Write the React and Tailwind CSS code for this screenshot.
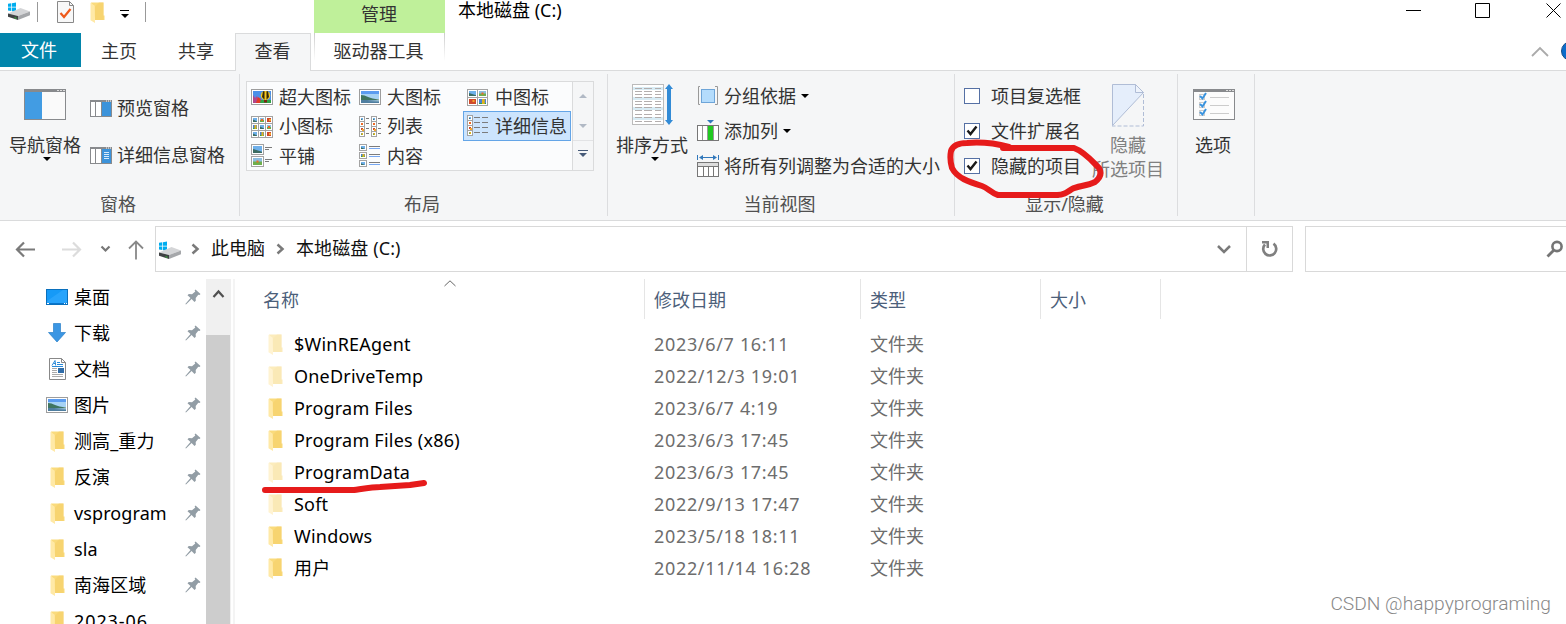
import React from 'react'

const quickAccess = [
  { name: '桌面', icon: 'desktop', pinned: true },
  { name: '下载', icon: 'download', pinned: true },
  { name: '文档', icon: 'document', pinned: true },
  { name: '图片', icon: 'picture', pinned: true },
  { name: '测高_重力', icon: 'folder', pinned: true },
  { name: '反演', icon: 'folder', pinned: true },
  { name: 'vsprogram', icon: 'folder', pinned: true },
  { name: 'sla', icon: 'folder', pinned: true },
  { name: '南海区域', icon: 'folder', pinned: true },
  { name: '2023-06', icon: 'folder', pinned: false },
]

const files = [
  { name: '$WinREAgent', date: '2023/6/7 16:11', hidden: true },
  { name: 'OneDriveTemp', date: '2022/12/3 19:01', hidden: true },
  { name: 'Program Files', date: '2023/6/7 4:19' },
  { name: 'Program Files (x86)', date: '2023/6/3 17:45' },
  { name: 'ProgramData', date: '2023/6/3 17:45', hidden: true },
  { name: 'Soft', date: '2022/9/13 17:47', hidden: true },
  { name: 'Windows', date: '2023/5/18 18:11' },
  { name: '用户', date: '2022/11/14 16:28' },
]

const layouts = [
  { name: '超大图标', icon: 'balloon' },
  { name: '大图标', icon: 'lake' },
  { name: '中图标', icon: 'medium' },
  { name: '小图标', icon: 'small' },
  { name: '列表', icon: 'list' },
  { name: '详细信息', icon: 'details', active: true },
  { name: '平铺', icon: 'tiles' },
  { name: '内容', icon: 'content' },
]

const DriveIcon = () => (
  <svg width="24" height="20" viewBox="0 0 24 20" className="shrink-0">
    <path d="M1 1.8l3.3-.5v3.5H1zM5 1.2L9 .6v4.2H5zM1 5.6h3.3v3.5L1 8.6zM5 5.6h4v4.2l-4-.6z" fill="#00adef" />
    <path d="M1 11.5L13.5 6 23 9.5 11 14z" fill="#d4d5d7" />
    <path d="M11 14l12-4.5v3.7L11 18z" fill="#a5a7aa" />
    <path d="M1 11.5L11 14v4L1 14.7z" fill="#3f4244" />
    <path d="M7.5 15.2l2 .5v1l-2-.5z" fill="#39c23c" />
  </svg>
)

const FolderIcon = ({ faded }) => (
  <svg width="15" height="24" viewBox="0 -2 15 24" className={faded ? 'shrink-0 opacity-50' : 'shrink-0'}>
    <path d="M1 .5h12.500v13h1v4.500H5z" fill="#fadb7c" />
    <path d="M5 4.500L9 .5h4.500v17.500H5z" fill="#f5cf69" opacity=".6" />
    <path d="M.5.8L4.700 3.800l.3 17.200L.5 18.200z" fill="#ffe9a6" />
  </svg>
)

const Thumb = ({ x, y, w, h, kind = 0 }) => (
  <g>
    <rect x={x + 0.5} y={y + 0.5} width={w - 1} height={h - 1} fill="#fff" stroke="#a3a3a3" />
    <rect x={x + 2} y={y + 2} width={w - 4} height={h - 4} fill={['#6fb0ea', '#8dbde0', '#cf4a2c', '#4d7fd6'][kind]} />
    {kind === 0 && (
      <path d={`M${x + 2} ${y + h * 0.45}L${x + w - 2} ${y + h * 0.7}V${y + h - 2}H${x + 2}z`} fill="#3c6c62" />
    )}
    {kind === 1 && (
      <>
        <rect x={x + 2} y={y + h / 2} width={w - 4} height={h / 2 - 2} fill="#6fae4c" />
        <rect x={x + w / 2 - 1} y={y + h / 2 - 1} width="2" height="2" fill="#ef6a25" />
      </>
    )}
    {kind === 2 && <rect x={x + w / 2} y={y + 3} width="2" height="2" fill="#f6a52a" />}
    {kind === 3 && (
      <>
        <rect x={x + 2} y={y + h - 3} width={w - 4} height="1" fill="#2fa348" />
        <rect x={x + w / 2 - 0.5} y={y + 2} width={w / 4} height={h - 4} fill="#e0b51c" />
      </>
    )}
  </g>
)

const LakeIcon = () => (
  <svg width="22" height="17" viewBox="0 0 22 17" className="shrink-0">
    <rect x=".5" y=".5" width="21" height="15" fill="#fff" stroke="#9d9d9d" />
    <rect x="2" y="2" width="18" height="3" fill="#5b9cf0" />
    <rect x="2" y="5" width="18" height="5" fill="#a6d2f4" />
    <path d="M2 6c5 0 8 3.500 18 4.500v1H2z" fill="#3f7560" />
    <path d="M2 11h18v3H2z" fill="#4f7ea0" />
    <path d="M8 12l12-1v1.500z" fill="#9cc3d6" />
  </svg>
)

const LayoutIcon = ({ name }) => {
  if (name === 'lake') return <LakeIcon />
  if (name === 'balloon') {
    return (
      <svg width="22" height="17" viewBox="0 0 22 17" className="shrink-0">
        <rect x=".5" y=".5" width="21" height="15" fill="#fff" stroke="#9d9d9d" />
        <rect x="2" y="2" width="18" height="12" fill="#4b90e8" />
        <path d="M2 11h18v3H2z" fill="#2fa348" />
        <path d="M2 6l2 3 2-2 2 4-2 3H2z" fill="#b3468a" />
        <path d="M7 8l3 2-1 4H5z" fill="#e33b25" />
        <ellipse cx="14.5" cy="6.5" rx="4.7" ry="4.5" fill="#f4c91e" />
        <path d="M12 2.300h1.500v8.500L11 8zM15.500 2.300H17L18 8l-2.500 2.800z" fill="#33260b" />
        <path d="M13 11h3v2.500h-3z" fill="#7d2414" />
      </svg>
    )
  }
  return (
    <svg width="22" height="23" viewBox="0 0 22 23" className="shrink-0">
      {name === 'medium' && (
        <>
          <Thumb x={0} y={3} w={11} h={9} />
          <Thumb x={10} y={3} w={11} h={9} kind={1} />
          <Thumb x={0} y={11} w={11} h={9} kind={2} />
          <Thumb x={10} y={11} w={11} h={9} kind={3} />
        </>
      )}
      {name === 'small' &&
        [0, 1, 2, 3, 0, 1, 0, 3, 2].map((kind, i) => (
          <Thumb key={i} x={(i % 3) * 7} y={1 + Math.floor(i / 3) * 7} w={8} h={8} kind={kind} />
        ))}
      {name === 'list' &&
        [0, 1, 2, 3].map((i) => (
          <g key={i}>
            <Thumb x={0} y={1 + i * 5} w={6} h={6} kind={i} />
            <Thumb x={12} y={1 + i * 5} w={6} h={6} kind={i} />
            <path d={`M7 ${3.5 + i * 5}h3M19 ${3.5 + i * 5}h3`} stroke="#7c7c7c" />
          </g>
        ))}
      {name === 'details' &&
        [0, 1, 2, 3].map((i) => (
          <g key={i}>
            <Thumb x={0} y={1 + i * 5} w={6} h={6} kind={i} />
            <path d={`M7 ${3.5 + i * 5}h6M15 ${3.5 + i * 5}h6`} stroke="#7c7c7c" />
          </g>
        ))}
      {name === 'tiles' && (
        <>
          <Thumb x={0} y={0} w={13} h={11} />
          <Thumb x={0} y={12} w={13} h={11} kind={1} />
          <path d="M14 3.5h7M14 5.5h4M14 15.5h7M14 17.5h4" stroke="#7c7c7c" />
        </>
      )}
      {name === 'content' &&
        [0, 1, 2].map((i) => (
          <g key={i}>
            <Thumb x={0} y={i * 8} w={8} h={7} kind={i === 1 ? 3 : 0} />
            <path d={`M10 ${2.5 + i * 8}h11`} stroke="#7c7c7c" />
            <path d={`M10 ${4.5 + i * 8}h11`} stroke="#77a8f2" />
          </g>
        ))}
    </svg>
  )
}

const PaneIcon = ({ details }) => (
  <svg width="22" height="17" viewBox="0 0 22 17" className="shrink-0">
    <rect x=".5" y=".5" width="21" height="16" fill="#fff" stroke="#888a8d" />
    <path d="M0 1h22" stroke="#888a8d" strokeWidth="2" />
    <path d="M5.5 2v14M11.5 2v14" stroke="#888a8d" />
    <path d="M12 2h9v14h-9z" fill="#3c93da" />
    <path d="M16 1h1M18 1h1M20 1h1" stroke="#fff" />
    {details && <path d="M14 5.5h5M14 7.5h5M14 9.5h5M14 11.5h5" stroke="#d6ebfb" />}
  </svg>
)

const NavPaneIcon = () => (
  <svg width="42" height="31" viewBox="0 0 42 31">
    <rect x=".5" y=".5" width="41" height="30" fill="#fafafa" stroke="#888a8d" />
    <path d="M0 1.5h42" stroke="#888a8d" strokeWidth="3" />
    <path d="M1 3h17v27H1z" fill="#429ce3" />
    <path d="M33 1.5h2M36 1.5h2M39 1.5h2" stroke="#ddd" />
  </svg>
)

const SortIcon = () => (
  <svg width="42" height="42" viewBox="0 0 42 42">
    <rect x=".5" y=".5" width="31" height="40" fill="#fff" stroke="#bbb" />
    {[4, 14, 24, 34].map((y) => (
      <path key={y} d={`M1 ${y + 0.5}h30`} stroke="#d8ecf5" strokeWidth="3" />
    ))}
    {[4, 7, 10, 13, 17, 20, 23, 26, 30, 33, 37].map((y) => (
      <path key={y} d={`M3 ${y + 0.5}h7M12 ${y + 0.5}h8M23 ${y + 0.5}h6`} stroke="#b3aeae" />
    ))}
    <path d="M37 0l4 5h-2v31h2l-4 5-4-5h2V5h-2z" fill="#328bd6" />
  </svg>
)

const GroupByIcon = () => (
  <svg width="22" height="22" viewBox="0 0 22 22" className="shrink-0">
    <path d="M3 1.5H1.500v18H3M18 1.500h2.500v18H18" fill="none" stroke="#999" />
    <rect x="4.500" y="4.500" width="13" height="13" fill="#b4dcfc" stroke="#6ea5d8" />
  </svg>
)

const AddColumnIcon = () => (
  <svg width="22" height="22" viewBox="0 0 22 22" className="shrink-0">
    <path d="M10 0h7l-3.500 3.500z" fill="#3178bb" />
    <rect x=".5" y="5.500" width="21" height="15" fill="#fff" stroke="#777" />
    <path d="M5.500 6v14M10.500 6v14M16.500 6v14" stroke="#999" />
    <path d="M11 6h5v14h-5z" fill="#22c922" />
  </svg>
)

const FitColumnsIcon = () => (
  <svg width="22" height="22" viewBox="0 0 22 22" className="shrink-0">
    <path d="M.5 0v5M21.500 0v5M3 2.500h16" stroke="#3178bb" />
    <path d="M2 2.500L6 0v5zM20 2.500L16 0v5z" fill="#3178bb" />
    <rect x=".5" y="7.500" width="21" height="14" fill="#fff" stroke="#777" />
    <path d="M1 8h20v3H1z" fill="#ddd" />
    <path d="M0 11.500h22M6.500 12v9M11.500 12v9M16.500 12v9" stroke="#777" />
  </svg>
)

const HideIcon = () => (
  <svg width="34" height="43" viewBox="0 0 34 43">
    <path d="M1.500.5h23l8 8-31 33z" fill="#e5eefb" stroke="#b0bdd6" />
    <path d="M24.500.5v8h8z" fill="#eef3fb" stroke="#b0bdd6" />
    <path d="M32.500 10v32H1" fill="none" stroke="#b0bdd6" strokeDasharray="4 2" />
  </svg>
)

const OptionsIcon = () => (
  <svg width="42" height="31" viewBox="0 0 42 31">
    <rect x=".5" y=".5" width="41" height="30" fill="#fcfcfc" stroke="#888a8d" />
    <path d="M0 1.500h42" stroke="#888a8d" strokeWidth="3" />
    <path d="M33 1.500h2M36 1.500h2M39 1.500h2" stroke="#ddd" />
    {[5, 13, 21].map((y) => (
      <g key={y}>
        <rect x="6.500" y={y + 0.5} width="5" height="5" fill="#fff" stroke="#ccc" />
        <path d={`M7 ${y + 2}l2.500 2.500L13 ${y - 1}`} fill="none" stroke="#3a94df" strokeWidth="2" />
        <path d={`M17 ${y + 3.5}h19`} stroke="#ccc" />
      </g>
    ))}
  </svg>
)

const SidebarIcon = ({ name }) => (
  <div className="flex w-[22px] justify-center shrink-0">
    {name === 'desktop' && (
      <svg width="22" height="16" viewBox="0 0 22 16">
        <rect x=".5" y=".5" width="21" height="15" fill="#169af7" stroke="#0a70bd" />
        <path d="M1 12L17 1h4v14H1z" fill="#36acff" opacity=".6" />
        <path d="M1 14.500h20" stroke="#0876cd" />
        <path d="M1 14.500h2M18 14.500h1M20 14.500h1" stroke="#fff" />
      </svg>
    )}
    {name === 'download' && (
      <svg width="18" height="20" viewBox="0 0 18 20">
        <path d="M5.500.5h7v9h5L9 19 .5 9.500h5z" fill="#3b96e3" stroke="#2a7fc9" strokeWidth=".7" />
      </svg>
    )}
    {name === 'document' && (
      <svg width="17" height="22" viewBox="0 0 17 22">
        <path d="M.5.5h12l4 4v17H.5z" fill="#fff" stroke="#888" />
        <path d="M12.500.5v4h4" fill="none" stroke="#888" />
        <path d="M3 7.500L6 2.500l.7 5M4.500 5.500h2" fill="none" stroke="#2989d8" />
        <path d="M8 4.500h3M8 6.500h6M3 8.500h11" stroke="#2989d8" />
        <path d="M3 10.500h5M3 12.500h5M3 14.500h5M3 16.500h11M3 18.500h11" stroke="#aaa" />
        <path d="M9 10h6v5H9z" fill="#2f6ca8" />
      </svg>
    )}
    {name === 'picture' && <LakeIcon />}
    {name === 'folder' && <FolderIcon />}
  </div>
)

const PinIcon = () => (
  <svg width="16" height="16" viewBox="0 0 16 16" className="shrink-0">
    <path d="M10.500.5L15.500 5l-1 1-1.200-.2-2.600 3.300.1 2.600-1.300 1.300L6.600 10 1 15.500l-.7-.5L5.500 9 2.500 6.200l1.300-1.100 3.200.2 3.300-2.800-.7-1z" fill="#929da5" />
  </svg>
)

const Caret = () => (
  <svg width="8" height="4" viewBox="0 0 8 4" className="shrink-0">
    <path d="M0 0h8L4 4z" fill="#000" />
  </svg>
)

const Chevron = () => (
  <svg width="9" height="12" viewBox="0 0 9 12" className="shrink-0">
    <path d="M1.500 1.500L6.500 6l-5 4.500" fill="none" stroke="#7a7a7a" strokeWidth="2.500" />
  </svg>
)

const Check = ({ label, checked }) => (
  <div className="flex h-[35px] items-center">
    <div className="mt-px flex h-4 w-4 items-center justify-center border border-[#5570a4] bg-white">
      {checked && (
        <svg width="12" height="12" viewBox="0 0 12 12">
          <path d="M1.500 5.500L4.500 9l6-7.500" fill="none" stroke="#1a1a1a" strokeWidth="2.400" />
        </svg>
      )}
    </div>
    <span className="ml-[11px]">{label}</span>
  </div>
)

const Group = ({ label, className, children }) => (
  <div className={`flex h-[142px] shrink-0 flex-col border-r border-[#dcdddf] ${className}`}>
    <div className="flex h-[117px]">{children}</div>
    <div className="h-[25px] pr-[3px] text-center text-[#505050]">{label}</div>
  </div>
)

const TitleBar = () => (
  <div className="flex h-[33px] items-start">
    <div className="flex h-6 w-[314px] items-center pl-[7px]">
      <DriveIcon />
      <div className="ml-[6px] h-5 w-px bg-[#999]" />
      <svg width="17" height="22" viewBox="0 0 17 22" className="ml-[19px]">
        <path d="M.5.5h12l4 4v17H.5z" fill="#f8f8f8" stroke="#888" />
        <path d="M12.500.5v4h4" fill="none" stroke="#888" />
        <path d="M3.500 12l3.500 4 6.500-8" fill="none" stroke="#ee5a1c" strokeWidth="2.200" />
      </svg>
      <div className="ml-4 flex"><FolderIcon /></div>
      <svg width="10" height="8" viewBox="0 0 10 8" className="ml-[15px] mt-1">
        <path d="M0 .5h9" stroke="#000" />
        <path d="M1 4h8L5 8z" fill="#000" />
      </svg>
      <div className="ml-[15px] h-5 w-px bg-[#999]" />
    </div>
    <div className="h-[33px] w-[131px] bg-[#bff09a] pt-px pr-px text-center text-[#333]">管理</div>
    <div className="ml-[13px] flex-1 leading-5 text-black">本地磁盘 (C:)</div>
    <svg width="160" height="20" viewBox="0 0 160 20" fill="none" stroke="#000">
      <path d="M0 10.500h15M69.500 3.500h14v14h-14zM140.500 3.500l14 14M154.500 3.500l-14 14" />
    </svg>
  </div>
)

const Tabs = () => (
  <div className="flex h-[38px] border-b border-[#dadbdc] text-[#333]">
    <div className="h-[34px] w-[81px] bg-[#0285ab] pt-1 pr-[3px] text-center text-white">文件</div>
    <div className="w-[77px] pt-[5px] pl-5">主页</div>
    <div className="w-[77px] pt-[5px] pl-5">共享</div>
    <div className="h-[38px] w-[76px] border-x border-t border-[#dadbdc] bg-[#f5f6f7] pt-1 pr-px text-center">查看</div>
    <div className="ml-[3px] flex w-[131px] justify-between">
      <div className="h-7 w-px bg-linear-to-b from-[#ccc] to-white" />
      <span className="pt-[5px] pr-[2px]">驱动器工具</span>
      <div className="h-7 w-px bg-linear-to-b from-[#ccc] to-white" />
    </div>
    <div className="flex flex-1 items-center justify-end overflow-hidden">
      <svg width="36" height="20" viewBox="0 0 36 20">
        <path d="M2 14l8-8 8 8" fill="none" stroke="#aaa" strokeWidth="1.800" />
        <circle cx="41" cy="9" r="9.500" fill="#0b6ccb" stroke="#174f88" />
      </svg>
    </div>
  </div>
)

const Ribbon = () => (
  <div className="flex h-[150px] border-b border-[#dadbdc] bg-[#f5f6f7] pt-[3px] text-[#333]">
    <Group label="窗格" className="w-[240px]">
      <div className="flex w-[90px] flex-col items-center pt-[15px]">
        <NavPaneIcon />
        <span className="mt-[13px] leading-6">导航窗格</span>
        <div className="mr-[-4px]"><Caret /></div>
      </div>
      <div className="flex flex-col gap-[23px] pt-[22px]">
        <div className="flex items-center gap-[5px] leading-6"><PaneIcon />预览窗格</div>
        <div className="flex items-center gap-[5px] leading-6"><PaneIcon details />详细信息窗格</div>
      </div>
    </Group>

    <Group label="布局" className="w-[368px]">
      <div className="mt-[7px] ml-[6px] flex h-[90px] border border-[#dadbdc] bg-[#fbfcfd]">
        <div className="grid w-[324px] grid-cols-3 grid-rows-3">
          {layouts.map((item) => (
            <div
              key={item.name}
              className={
                item.active
                  ? 'flex items-center gap-[6px] border border-[#64a5e7] bg-[#cce4fd] pl-[3px]'
                  : 'flex items-center gap-[6px] pt-px pl-1'
              }
            >
              <LayoutIcon name={item.icon} />
              {item.name}
            </div>
          ))}
        </div>
        <div className="ml-px flex w-[21px] flex-col items-center border-l border-[#dadbdc] bg-[#f5f6f7]">
          <svg width="20" height="88" viewBox="0 0 20 88">
            <path d="M6 16h8l-4-4zM6 42h8l-4 4z" fill="#b1b9c5" />
            <path d="M0 58.500h20" stroke="#e2e3e5" />
            <path d="M5 68.500h10" stroke="#465a78" />
            <path d="M6 71h8l-4 4z" fill="#465a78" />
          </svg>
        </div>
      </div>
    </Group>

    <Group label="当前视图" className="w-[347px]">
      <div className="flex w-[89px] flex-col items-center pt-[10px]">
        <SortIcon />
        <span className="mt-[7px] mr-px leading-6">排序方式</span>
        <div className="mr-[-4px]"><Caret /></div>
      </div>
      <div className="flex flex-col pt-1">
        <div className="flex h-[35px] items-center gap-[5px]"><GroupByIcon />分组依据<Caret /></div>
        <div className="flex h-[35px] items-center gap-[5px]"><AddColumnIcon />添加列<Caret /></div>
        <div className="flex h-[35px] items-center gap-[5px]"><FitColumnsIcon />将所有列调整为合适的大小</div>
      </div>
    </Group>

    <Group label="显示/隐藏" className="w-[223px]">
      <div className="w-[126px] shrink-0 pt-1 pl-[9px]">
        <Check label="项目复选框" />
        <Check label="文件扩展名" checked />
        <Check label="隐藏的项目" checked />
      </div>
      <div className="flex w-[94px] flex-col items-center pt-[10px] text-center text-[#808080]">
        <HideIcon />
        <span className="mt-[6px] leading-6">隐藏<br />所选项目</span>
      </div>
    </Group>

    <Group label="" className="w-[77px]">
      <div className="flex w-[72px] flex-col items-center pt-[15px]">
        <OptionsIcon />
        <span className="mt-[13px] mr-[2px] leading-6">选项</span>
      </div>
    </Group>
  </div>
)

const AddressBar = () => (
  <div className="flex h-[58px] pt-[5px] text-[#111]">
    <div className="flex h-[46px] w-[155px] items-center">
      <svg width="150" height="24" viewBox="0 0 150 24" fill="none">
        <path d="M17 12.500h18M24 5.500l-7 7 7 7" stroke="#7a7a7a" strokeWidth="2.200" />
        <path d="M62 12.500h18M73 5.500l7 7-7 7" stroke="#dcdcdc" strokeWidth="2.200" />
        <path d="M101.500 9.500l4 4 4-4" stroke="#777" strokeWidth="2.200" />
        <path d="M136 22.500V4.500M129 11.500l7-7 7 7" stroke="#888" strokeWidth="1.800" />
      </svg>
    </div>
    <div className="flex h-[46px] w-[1138px] items-center border border-[#d9d9d9]">
      <div className="ml-[2px] flex pt-[3px]"><DriveIcon /></div>
      <div className="ml-[9px] flex"><Chevron /></div>
      <span className="ml-[11px] pb-[2px]">此电脑</span>
      <div className="ml-[11px] flex"><Chevron /></div>
      <span className="ml-[11px] flex-1 pb-[2px] tracking-[0.1px]">本地磁盘 (C:)</span>
      <svg width="16" height="10" viewBox="0 0 16 10" className="mr-[14px]">
        <path d="M2 2l6 6 6-6" fill="none" stroke="#7a7a7a" strokeWidth="2.500" />
      </svg>
      <div className="flex h-full w-[46px] items-center justify-center border-l border-[#d9d9d9]">
        <svg width="18" height="18" viewBox="0 0 18 18">
          <path d="M12.500 3.700A6.500 6.500 0 1 1 4 4.500" fill="none" stroke="#808080" strokeWidth="2.700" />
          <path d="M1 1h7v7H5.500V3.500H1z" fill="#808080" />
        </svg>
      </div>
    </div>
    <div className="ml-3 flex h-[46px] flex-1 items-center justify-end border-y border-l border-[#d9d9d9]">
      <svg width="20" height="20" viewBox="0 0 20 20">
        <circle cx="11" cy="7.500" r="4.600" fill="none" stroke="#757575" strokeWidth="2.600" />
        <path d="M7.500 11.500L1.500 17.500" stroke="#757575" strokeWidth="2.800" />
      </svg>
    </div>
  </div>
)

const Sidebar = () => (
  <div className="flex h-[345px] w-[236px] shrink-0 overflow-hidden">
    <div className="w-[206px]">
      {quickAccess.map((item) => (
        <div key={item.name} className="flex h-9 items-center pr-[5px] pl-[46px] text-black">
          <SidebarIcon name={item.icon} />
          <span className={item.pinned ? 'ml-[6px] flex-1 tracking-[0.1px]' : 'ml-[6px] flex-1 tracking-[0.9px]'}>
            {item.name}
          </span>
          {item.pinned && <PinIcon />}
        </div>
      ))}
    </div>
    <div className="w-[25px] bg-[#f0f0f0]">
      <div className="flex h-14 justify-center pt-[10px]">
        <svg width="13" height="10" viewBox="0 0 13 10">
          <path d="M1.500 8l5-5.500 5 5.500" fill="none" stroke="#505050" strokeWidth="2.200" />
        </svg>
      </div>
      <div className="h-full w-6 bg-[#cdcdcd]" />
    </div>
    <div className="ml-[2px] w-[2px] bg-[#f4f4f4]" />
  </div>
)

const FileList = () => (
  <div className="flex-1">
    <div className="flex h-10 text-[#4c607a]">
      <div className="relative w-[409px] border-r border-[#e5e5e5] pt-2 pl-[27px]">
        名称
        <svg width="12" height="7" viewBox="0 0 12 7" className="absolute top-[1px] left-[208px]">
          <path d="M.5 6L6 .8 11.500 6" fill="none" stroke="#666" />
        </svg>
      </div>
      <div className="w-[216px] border-r border-[#e5e5e5] pt-2 pl-[9px]">修改日期</div>
      <div className="w-[180px] border-r border-[#e5e5e5] pt-2 pl-[9px]">类型</div>
      <div className="w-[120px] border-r border-[#e5e5e5] pt-2 pl-[9px]">大小</div>
    </div>
    <div className="pt-[9px]">
      {files.map((file) => (
        <div key={file.name} className="flex h-8 items-center text-[#6d6d6d]">
          <div className="flex w-[418px] items-center gap-[11px] pl-8 tracking-[0.22px] text-black">
            <FolderIcon faded={file.hidden} />
            <span>{file.name}</span>
          </div>
          <span className="w-[216px] tracking-[0.67px]">{file.date}</span>
          <span>文件夹</span>
        </div>
      ))}
    </div>
  </div>
)

// red pen strokes drawn over the window
const PenMarks = () => (
  <svg width="1566" height="624" viewBox="0 0 1566 624" className="pointer-events-none absolute top-0 left-0">
    <g fill="none" stroke="#e61b1b" strokeWidth="6" strokeLinecap="round" strokeLinejoin="round">
      <path d="M1003 148H1074C1085 152 1093 162 1099 168C1102 173 1100 178 1095 182C1087 186 1077 186 1072 189C1066 193 1063 195 1057 195H998C991 193 988 188 982 186C969 182 957 178 952 168C950 161 950 156 951 151C953 145 958 143 967 143C979 142 994 143 1009 147" />
      <path d="M265 490H354C368 488 374 487 380 487L410 485L424 483" />
    </g>
  </svg>
)

const App = () => {
  return (
    <div className="relative h-[624px] w-[1566px] overflow-hidden bg-white font-['Noto_Sans','Noto_Sans_CJK_SC',sans-serif] text-[18px] leading-[26px] whitespace-nowrap">
      <TitleBar />
      <Tabs />
      <Ribbon />
      <AddressBar />
      <div className="flex">
        <Sidebar />
        <FileList />
      </div>
      <PenMarks />
      <div className="absolute right-[15px] bottom-[7px] font-['Roboto',sans-serif] text-[19.2px] font-light text-[#888]">
        CSDN @happyprograming
      </div>
    </div>
  )
}

export default App
